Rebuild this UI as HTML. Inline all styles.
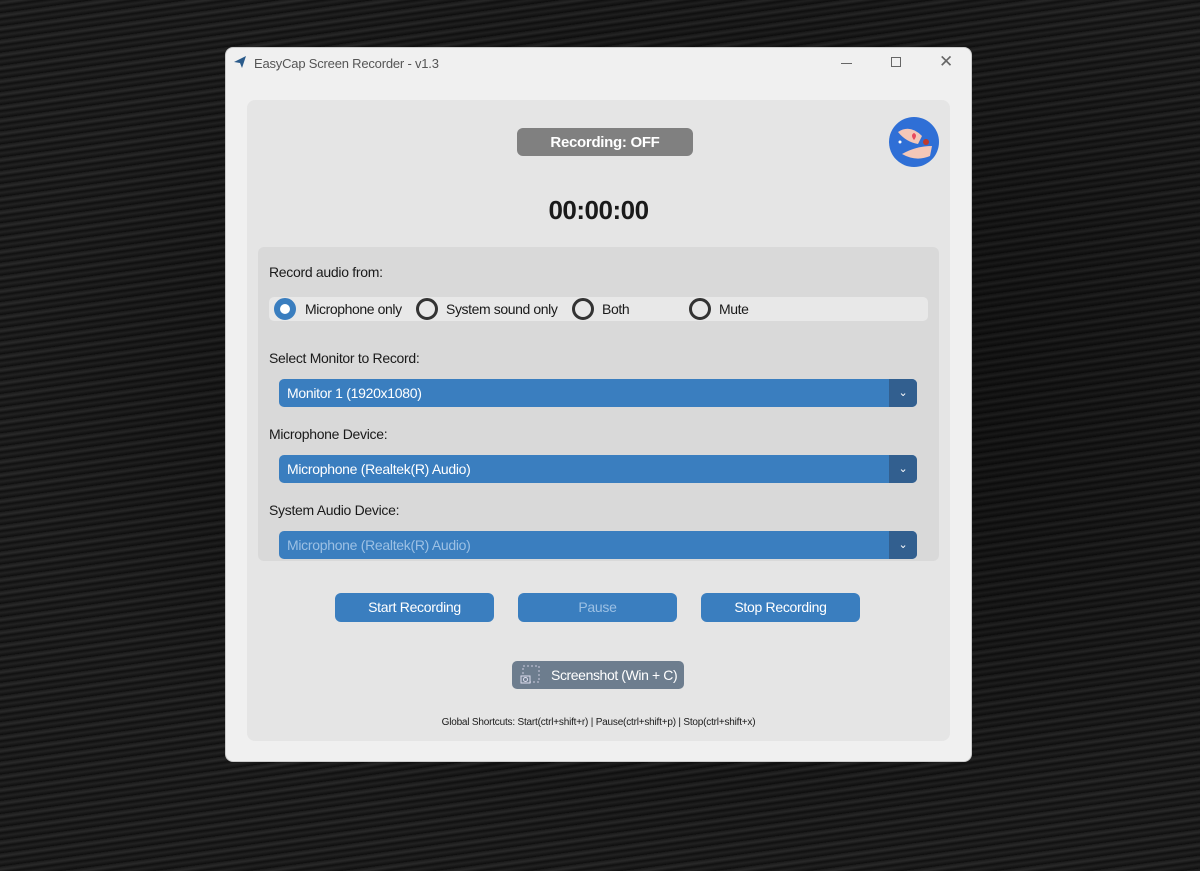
<!DOCTYPE html>
<html><head><style>
*{margin:0;padding:0;box-sizing:border-box}
body{width:1200px;height:871px;overflow:hidden;font-family:"Liberation Sans",sans-serif;position:relative;background:#151515}
.bg{position:absolute;left:0;top:0;width:1200px;height:871px;
background:repeating-linear-gradient(172deg,#1b1b1b 0px,#2e2e2e 3px,#121212 6px,#262626 9px,#0f0f0f 13px)}
.bg2{position:absolute;left:0;top:0;width:1200px;height:871px;background:radial-gradient(ellipse at 60% 45%,rgba(0,0,0,0.55),rgba(0,0,0,0.1) 70%)}
.a{position:absolute}
.win{left:225px;top:47px;width:747px;height:715px;background:#f0f0f0;border-radius:8px;border:1px solid #ccc}
.txt{font-size:13px;color:#555;letter-spacing:-0.2px}
.panel{left:247px;top:100px;width:703px;height:641px;background:#e5e5e5;border-radius:8px}
.frame{left:258px;top:247px;width:681px;height:314px;background:#d9d9d9;border-radius:6px}
.lbl{font-size:14px;color:#1a1a1a;letter-spacing:-0.3px}
.dd{left:279px;width:638px;height:28px;background:#3a7ebf;border-radius:5px;color:#fff;font-size:14px;line-height:28px;padding-left:8px;overflow:hidden;letter-spacing:-0.3px}
.dd .ar{position:absolute;right:0;top:0;width:28px;height:28px;background:#325f8f;text-align:center;font-size:11px}
.btn{top:593px;width:159px;height:29px;background:#3a7ebf;border-radius:6px;color:#fff;font-size:14px;line-height:29px;text-align:center;letter-spacing:-0.3px}
.rad{width:22px;height:22px;border-radius:50%;border:3px solid #333;top:298px}
.rt{top:301px;font-size:14px;color:#1a1a1a;letter-spacing:-0.4px;white-space:nowrap}
</style></head><body>
<div class="bg"></div><div class="bg2"></div>
<div class="a win"></div>
<svg class="a" style="left:233px;top:55px" width="14" height="14"><path d="M13 1 L1 7 L7 8 L9 13 Z" fill="#2a5a8a"/></svg>
<div class="a txt" style="left:254px;top:56px">EasyCap Screen Recorder - v1.3</div>
<div class="a" style="left:841px;top:63px;width:11px;height:1px;background:#666"></div>
<div class="a" style="left:891px;top:57px;width:10px;height:10px;border:1px solid #666"></div>
<div class="a" style="left:939px;top:52px;font-size:17px;color:#666">✕</div>
<div class="a panel"></div>
<div class="a" style="left:517px;top:128px;width:176px;height:28px;background:#808080;border-radius:6px;color:#fff;font-weight:bold;font-size:15px;line-height:30px;text-align:center;letter-spacing:-0.3px">Recording: OFF</div>
<svg class="a" style="left:888px;top:116px" width="52" height="52"><circle cx="26" cy="26" r="25" fill="#2f6fd6"/><path d="M10 16 Q22 8 34 20 L30 28 Q18 26 10 16Z" fill="#f4c7b8"/><path d="M14 38 Q28 30 44 30 L42 40 Q28 46 14 38Z" fill="#f4c7b8"/><path d="M26 24 q-4-5 0-7 q4 2 0 7z" fill="#e84a5f"/><circle cx="38" cy="26" r="3" fill="#c0392b"/><circle cx="12" cy="26" r="1.5" fill="#fff"/></svg>
<div class="a" style="left:0;width:1197px;top:195px;text-align:center;font-size:26px;font-weight:bold;color:#1a1a1a;letter-spacing:-0.5px">00:00:00</div>
<div class="a frame"></div>
<div class="a lbl" style="left:269px;top:264px">Record audio from:</div>
<div class="a" style="left:269px;top:297px;width:659px;height:24px;background:#e8e8e8;border-radius:5px"></div>
<div class="a rad" style="left:274px;border:6px solid #3a7ebf;background:#fff"></div><div class="a rt" style="left:305px">Microphone only</div>
<div class="a rad" style="left:416px"></div><div class="a rt" style="left:446px">System sound only</div>
<div class="a rad" style="left:572px"></div><div class="a rt" style="left:602px">Both</div>
<div class="a rad" style="left:689px"></div><div class="a rt" style="left:719px">Mute</div>
<div class="a lbl" style="left:269px;top:350px">Select Monitor to Record:</div>
<div class="a dd" style="top:379px">Monitor 1 (1920x1080)<div class="ar">⌄</div></div>
<div class="a lbl" style="left:269px;top:426px">Microphone Device:</div>
<div class="a dd" style="top:455px">Microphone (Realtek(R) Audio)<div class="ar">⌄</div></div>
<div class="a lbl" style="left:269px;top:502px">System Audio Device:</div>
<div class="a dd" style="top:531px;color:#9cc0e4">Microphone (Realtek(R) Audio)<div class="ar" style="color:#fff">⌄</div></div>
<div class="a btn" style="left:335px">Start Recording</div>
<div class="a btn" style="left:518px;color:#9cc0e4">Pause</div>
<div class="a btn" style="left:701px">Stop Recording</div>
<div class="a" style="left:512px;top:661px;width:172px;height:28px;background:#6d7d8e;border-radius:5px;color:#fff;font-size:14px;line-height:28px;padding-left:39px;white-space:nowrap;letter-spacing:-0.4px">Screenshot (Win + C)</div>
<svg class="a" style="left:519px;top:664px" width="22" height="22"><rect x="4" y="2" width="16" height="16" fill="none" stroke="#ccd" stroke-dasharray="2 2"/><rect x="2" y="12" width="9" height="7" fill="#6d7d8e" stroke="#dde"/><circle cx="6.5" cy="15.5" r="2" fill="none" stroke="#dde"/></svg>
<div class="a" style="left:0;width:1197px;top:717px;text-align:center;font-size:10px;color:#1a1a1a;letter-spacing:-0.2px">Global Shortcuts: Start(ctrl+shift+r) | Pause(ctrl+shift+p) | Stop(ctrl+shift+x)</div>
</body></html>
